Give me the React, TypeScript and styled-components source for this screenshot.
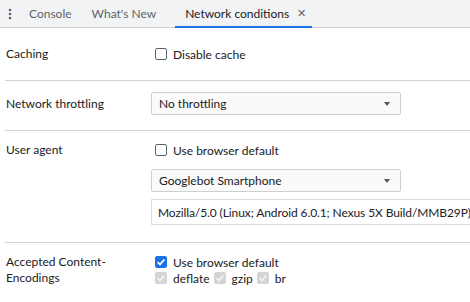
import React from 'react'
import styled, { createGlobalStyle } from 'styled-components'

const GlobalStyle = createGlobalStyle`
  html, body {
    margin: 0;
    padding: 0;
    background: #fff;
    overflow: hidden;
  }
  body {
    font-family: Lato, "Noto Sans", sans-serif;
    font-size: 12px;
    color: #202124;
  }
`

const TabBar = styled.div`
  display: flex;
  align-items: stretch;
  height: 28px;
  box-sizing: border-box;
  background: #f1f3f4;
  border-bottom: 1px solid #cbcdd1;
`

const Dots = styled.div`
  width: 19px;
  display: flex;
  align-items: center;
  justify-content: center;
`

const Tab = styled.div<{ $active?: boolean }>`
  display: flex;
  align-items: center;
  gap: 8px;
  padding: 0 ${p => (p.$active ? '6px 0 10px' : '10px')};
  margin-left: ${p => (p.$active ? '9px' : '0')};
  color: ${p => (p.$active ? '#202124' : '#5f6368')};
  border-bottom: 2px solid ${p => (p.$active ? '#1a73e8' : 'transparent')};
  margin-bottom: -1px;
  white-space: nowrap;
`

const Close = styled.span`
  font-size: 11px;
  color: #5f6368;
`

const Section = styled.div<{ $pad: string; $last?: boolean }>`
  display: grid;
  grid-template-columns: 146px 1fr;
  margin-left: 5px;
  padding: ${p => p.$pad};
  border-bottom: ${p => (p.$last ? 'none' : '1px solid #d3d3d3')};
`

const Label = styled.div<{ $line?: number }>`
  padding-left: 1px;
  line-height: ${p => p.$line ?? 24}px;
`

const Controls = styled.div`
  display: flex;
  flex-direction: column;
`

const CheckRow = styled.label<{ $height?: number }>`
  display: flex;
  align-items: center;
  gap: 6px;
  height: ${p => p.$height ?? 24}px;
  padding-left: 4px;
`

const Box = styled.span<{ $checked?: boolean; $disabled?: boolean }>`
  width: 12px;
  height: 12px;
  box-sizing: border-box;
  border-radius: 2px;
  display: inline-flex;
  align-items: center;
  justify-content: center;
  border: 1px solid ${p => (p.$checked ? (p.$disabled ? '#d4d4d4' : '#1a73e8') : '#5f6368')};
  background: ${p => (p.$checked ? (p.$disabled ? '#d4d4d4' : '#1a73e8') : '#fff')};
  flex-shrink: 0;
`

const Select = styled.div<{ $top?: number }>`
  width: 250px;
  height: 23px;
  margin-top: ${p => p.$top ?? 0}px;
  box-sizing: border-box;
  border: 1px solid #cfcfcf;
  border-radius: 2px;
  background: #fafafa;
  display: flex;
  align-items: center;
  justify-content: space-between;
  padding: 0 10px 0 7px;
`

const Arrow = styled.span`
  width: 0;
  height: 0;
  border-left: 3.5px solid transparent;
  border-right: 3.5px solid transparent;
  border-top: 4px solid #555;
`

const TextInput = styled.div`
  margin-top: 7px;
  height: 26px;
  box-sizing: border-box;
  border: 1px solid #dadada;
  border-right: none;
  display: flex;
  align-items: center;
  padding-left: 6px;
  white-space: nowrap;
  overflow: hidden;
  letter-spacing: -0.1px;
`

const Encodings = styled.div`
  display: flex;
  align-items: center;
  height: 16px;
  padding-left: 4px;
`

const Encoding = styled.span`
  display: inline-flex;
  align-items: center;
  gap: 6px;
  margin-right: 4px;
`

const Check = ({ checked, disabled }: { checked?: boolean; disabled?: boolean }) => (
  <Box $checked={checked} $disabled={disabled}>
    {checked && (
      <svg width="10" height="10" viewBox="0 0 10 10">
        <path d="M1.6 5.1 L4 7.4 L8.4 2.5" fill="none" stroke={disabled ? '#f2f2f2' : '#fff'} strokeWidth="1.8" />
      </svg>
    )}
  </Box>
)

export default function App() {
  return (
    <>
      <GlobalStyle />
      <TabBar>
        <Dots>
          <svg width="4" height="12" viewBox="0 0 4 12">
            <circle cx="2" cy="2" r="1.3" fill="#5f6368" />
            <circle cx="2" cy="6" r="1.3" fill="#5f6368" />
            <circle cx="2" cy="10" r="1.3" fill="#5f6368" />
          </svg>
        </Dots>
        <Tab>Console</Tab>
        <Tab>What's New</Tab>
        <Tab $active>
          Network conditions <Close>✕</Close>
        </Tab>
      </TabBar>

      <Section $pad="14px 0">
        <Label>Caching</Label>
        <Controls>
          <CheckRow>
            <Check /> Disable cache
          </CheckRow>
        </Controls>
      </Section>

      <Section $pad="11px 0 15px">
        <Label $line={23}>Network throttling</Label>
        <Controls>
          <Select>
            No throttling <Arrow />
          </Select>
        </Controls>
      </Section>

      <Section $pad="7px 0 17px">
        <Label>User agent</Label>
        <Controls>
          <CheckRow>
            <Check /> Use browser default
          </CheckRow>
          <Select $top={7}>
            Googlebot Smartphone <Arrow />
          </Select>
          <TextInput>Mozilla/5.0 (Linux; Android 6.0.1; Nexus 5X Build/MMB29P)</TextInput>
        </Controls>
      </Section>

      <Section $pad="11px 0" $last>
        <Label $line={16}>
          Accepted Content-
          <br />
          Encodings
        </Label>
        <Controls>
          <CheckRow $height={16}>
            <Check checked /> Use browser default
          </CheckRow>
          <Encodings>
            <Encoding>
              <Check checked disabled /> deflate
            </Encoding>
            <Encoding>
              <Check checked disabled /> gzip
            </Encoding>
            <Encoding>
              <Check checked disabled /> br
            </Encoding>
          </Encodings>
        </Controls>
      </Section>
    </>
  )
}
